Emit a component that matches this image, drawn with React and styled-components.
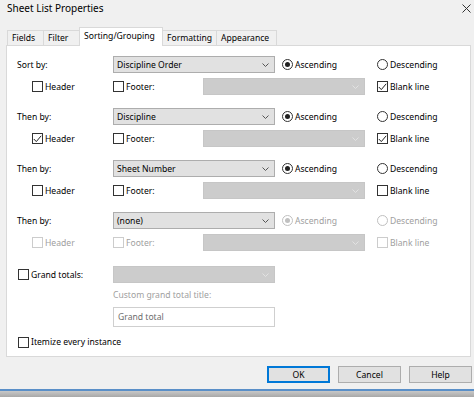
import React from "react";
import styled, { createGlobalStyle } from "styled-components";

const GlobalStyle = createGlobalStyle`
  html, body {
    margin: 0;
    padding: 0;
    background: #f0f0f0;
  }
  body {
    font-family: "Noto Sans", "Open Sans", sans-serif;
    font-size: 8.6px;
    color: #000;
  }
`;

const Window = styled.div`
  width: 474px;
  height: 397px;
  background: #f0f0f0;
  display: flex;
  flex-direction: column;
  overflow: hidden;
`;

const TitleBar = styled.div`
  height: 27px;
  display: flex;
  justify-content: space-between;
  align-items: flex-start;
  padding: 1px 3px 0 7px;
  box-sizing: border-box;
`;

const Title = styled.span`
  font-size: 10px;
  line-height: 14px;
`;

const CloseButton = styled.svg`
  margin-top: 3px;
`;

const TabStrip = styled.div`
  display: flex;
  align-items: flex-end;
  height: 19px;
  padding-left: 7px;
  margin-bottom: -1px;
  position: relative;
  z-index: 1;
`;

const Tab = styled.div`
  width: ${(p) => p.$w}px;
  height: ${(p) => (p.$active ? 19 : 16)}px;
  box-sizing: border-box;
  border: 1px solid #d9d9d9;
  border-bottom: ${(p) => (p.$active ? "none" : "1px solid #d9d9d9")};
  background: ${(p) => (p.$active ? "#fff" : "#f0f0f0")};
  margin-left: -1px;
  display: flex;
  align-items: center;
  padding-left: ${(p) => (p.$active ? 4 : 4)}px;
  padding-bottom: ${(p) => (p.$active ? 3 : 0)}px;
  position: relative;
  z-index: ${(p) => (p.$active ? 2 : 1)};
  &:first-child {
    margin-left: 0;
  }
`;

const Panel = styled.div`
  margin-left: 6px;
  width: 465px;
  height: 312px;
  box-sizing: border-box;
  background: #fff;
  border: 1px solid #d9d9d9;
  padding: 10px 0 0 10px;
  display: flex;
  flex-direction: column;
`;

const Group = styled.div`
  display: flex;
  flex-direction: column;
  gap: 5px;
  margin-bottom: 13px;
`;

const Row = styled.div`
  display: flex;
  align-items: center;
  height: 17px;
  padding-left: ${(p) => p.$indent || 0}px;
`;

const FieldLabel = styled.div`
  width: 96px;
  color: ${(p) => (p.$disabled ? "#a0a0a0" : "#000")};
`;

const ComboBox = styled.div`
  width: ${(p) => p.$w || 162}px;
  height: ${(p) => p.$h || 17}px;
  box-sizing: border-box;
  border: 1px solid ${(p) => (p.$disabled ? "#c6c6c6" : "#adadad")};
  background: ${(p) => (p.$disabled ? "#cccccc" : "#e1e1e1")};
  display: flex;
  align-items: center;
  justify-content: space-between;
  padding: 0 5px 0 3px;
  flex-shrink: 0;
`;

const Option = styled.label`
  display: flex;
  align-items: center;
  gap: 2px;
  width: ${(p) => (p.$w ? `${p.$w}px` : "auto")};
  margin-left: ${(p) => p.$ml || 0}px;
  color: ${(p) => (p.$disabled ? "#a0a0a0" : "#000")};
  flex-shrink: 0;
`;

const RadioCircle = styled.span`
  width: 11px;
  height: 11px;
  box-sizing: border-box;
  border-radius: 50%;
  border: 1px solid ${(p) => (p.$disabled ? "#c0c0c0" : "#333")};
  background: #fff;
  display: flex;
  align-items: center;
  justify-content: center;
  &::after {
    content: "";
    display: ${(p) => (p.$checked ? "block" : "none")};
    width: 5px;
    height: 5px;
    border-radius: 50%;
    background: ${(p) => (p.$disabled ? "#c0c0c0" : "#222")};
  }
`;

const CheckSquare = styled.span`
  width: 11px;
  height: 11px;
  box-sizing: border-box;
  border: 1px solid ${(p) => (p.$disabled ? "#cccccc" : "#333")};
  background: #fff;
  display: flex;
  align-items: center;
  justify-content: center;
`;

const TextLine = styled.div`
  height: 12px;
  line-height: 12px;
  margin: ${(p) => p.$m || "0"};
  padding-left: ${(p) => p.$indent || 0}px;
  color: ${(p) => (p.$muted ? "#a0a0a0" : "#000")};
`;

const TextInput = styled.div`
  margin: 6px 0 0 96px;
  width: 162px;
  height: 20px;
  box-sizing: border-box;
  border: 1px solid #cfcfcf;
  background: #fff;
  color: #6d6d6d;
  display: flex;
  align-items: center;
  padding-left: 4px;
`;

const ButtonBar = styled.div`
  display: flex;
  justify-content: flex-end;
  gap: 8px;
  padding-right: 2px;
  margin-top: 9px;
`;

const Button = styled.div`
  width: 63px;
  height: 17px;
  box-sizing: border-box;
  border: 1px solid ${(p) => (p.$default ? "#0078d7" : "#adadad")};
  box-shadow: ${(p) => (p.$default ? "inset 0 0 0 1px #0078d7" : "none")};
  background: #e1e1e1;
  display: flex;
  align-items: center;
  justify-content: center;
`;

const BottomEdge = styled.div`
  margin-top: 6px;
  height: 8px;
  border-top: 2px solid #5a8fc8;
  background: linear-gradient(#c8c8c8, #a8a8a8);
  box-sizing: border-box;
`;

const Chevron = ({ disabled }) => (
  <svg width="7" height="4" viewBox="0 0 7 4">
    <polyline
      points="0.5,0.5 3.5,3.5 6.5,0.5"
      fill="none"
      stroke={disabled ? "#e2e2e2" : "#555"}
      strokeWidth="1"
    />
  </svg>
);

const Combo = ({ value, disabled, w }) => (
  <ComboBox $disabled={disabled} $w={w}>
    <span>{value}</span>
    <Chevron disabled={disabled} />
  </ComboBox>
);

const Radio = ({ label, checked, disabled, w, ml }) => (
  <Option $disabled={disabled} $w={w} $ml={ml}>
    <RadioCircle $checked={checked} $disabled={disabled} />
    {label}
  </Option>
);

const Check = ({ label, checked, disabled, w, ml }) => (
  <Option $disabled={disabled} $w={w} $ml={ml}>
    <CheckSquare $disabled={disabled}>
      {checked && (
        <svg width="9" height="8" viewBox="0 0 9 8">
          <polyline
            points="0.8,4 3.3,6.6 8.2,0.8"
            fill="none"
            stroke="#222"
            strokeWidth="1"
          />
        </svg>
      )}
    </CheckSquare>
    {label}
  </Option>
);

const groups = [
  { label: "Sort by:", value: "Discipline Order", header: false, blank: true },
  { label: "Then by:", value: "Discipline", header: true, blank: true },
  { label: "Then by:", value: "Sheet Number", header: false, blank: false },
  { label: "Then by:", value: "(none)", header: false, blank: false, off: true },
];

const tabs = [
  { name: "Fields", w: 37 },
  { name: "Filter", w: 37 },
  { name: "Sorting/Grouping", w: 84, active: true },
  { name: "Formatting", w: 55 },
  { name: "Appearance", w: 61 },
];

const SortGroup = ({ g }) => (
  <Group>
    <Row>
      <FieldLabel>{g.label}</FieldLabel>
      <Combo value={g.value} />
      <Radio label="Ascending" checked w={95} ml={7} disabled={g.off} />
      <Radio label="Descending" disabled={g.off} />
    </Row>
    <Row $indent={15}>
      <Check label="Header" checked={g.header} w={81} disabled={g.off} />
      <Check label="Footer:" w={90} disabled={g.off} />
      <Combo disabled w={162} />
      <Check label="Blank line" checked={g.blank} ml={12} disabled={g.off} />
    </Row>
  </Group>
);

export default function App() {
  return (
    <>
      <GlobalStyle />
      <Window>
        <TitleBar>
          <Title>Sheet List Properties</Title>
          <CloseButton width="9" height="9" viewBox="0 0 9 9">
            <path d="M0.5 0.5 L8.5 8.5 M8.5 0.5 L0.5 8.5" stroke="#333" strokeWidth="1" />
          </CloseButton>
        </TitleBar>
        <TabStrip>
          {tabs.map((t) => (
            <Tab key={t.name} $w={t.w} $active={t.active}>
              {t.name}
            </Tab>
          ))}
        </TabStrip>
        <Panel>
          {groups.map((g, i) => (
            <SortGroup key={i} g={g} />
          ))}
          <Row style={{ marginTop: 2 }}>
            <Check label="Grand totals:" w={95} ml={1} />
            <Combo disabled />
          </Row>
          <TextLine $m="6px 0 0 0" $indent={96} $muted>
            Custom grand total title:
          </TextLine>
          <TextInput>Grand total</TextInput>
          <TextLine $m="9px 0 0 1px">
            <Check label="Itemize every instance" />
          </TextLine>
        </Panel>
        <ButtonBar>
          <Button $default>OK</Button>
          <Button>Cancel</Button>
          <Button>Help</Button>
        </ButtonBar>
        <BottomEdge />
      </Window>
    </>
  );
}
